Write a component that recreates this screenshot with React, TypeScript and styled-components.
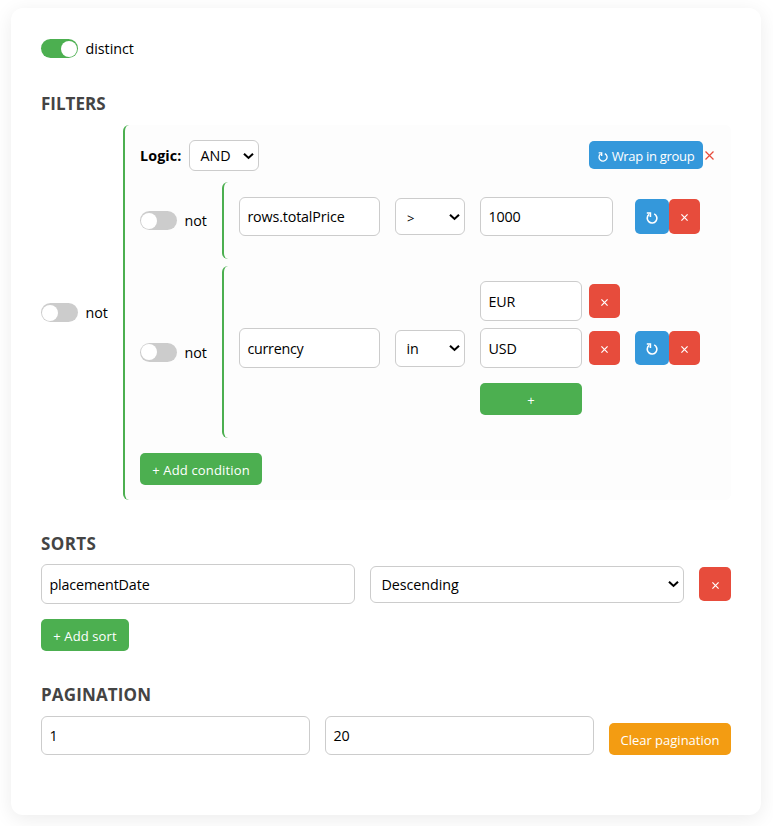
import React from 'react';
import styled, { createGlobalStyle, css } from 'styled-components';

const GlobalStyle = createGlobalStyle`
  *, *::before, *::after { box-sizing: border-box; }
  body {
    margin: 0;
    min-height: 826px;
    background: #fff;
    color: #000;
    font-family: "Segoe UI", "Open Sans", "Noto Sans", sans-serif;
    font-size: 14.3px;
    overflow: hidden;
  }
  #root { display: flow-root; }
  input, select, button { font-family: inherit; margin: 0; }
`;

const Card = styled.main`
  width: 750px;
  height: 807px;
  margin: 8px 0 0 11px;
  padding: 30px;
  background: #fff;
  border-radius: 12px;
  box-shadow: 0 4px 20px rgba(0, 0, 0, 0.08);
`;

const ToggleLabel = styled.label<{ $width?: number }>`
  display: flex;
  flex: none;
  align-items: center;
  gap: 7.6px;
  width: ${p => (p.$width ? `${p.$width}px` : 'auto')};
  height: 21px;
  line-height: 21px;
  letter-spacing: -0.05px;
`;

const Track = styled.span<{ $on?: boolean }>`
  display: flex;
  flex: none;
  justify-content: ${p => (p.$on ? 'flex-end' : 'flex-start')};
  width: 37px;
  height: 19px;
  padding: 1.5px 1.5px 1.5px 1px;
  border-radius: 10px;
  background: ${p => (p.$on ? '#4caf50' : '#ccc')};
`;

const Knob = styled.span`
  width: 16px;
  height: 16px;
  border-radius: 50%;
  background: #fff;
`;

const ToggleText = styled.span`
  padding-top: 0.5px;
`;

const Heading = styled.h3<{ $top: number; $tracking?: number }>`
  margin: ${p => p.$top}px 0 0;
  height: 24px;
  line-height: 24px;
  font-size: 17px;
  font-weight: 700;
  color: #444;
  letter-spacing: ${p => p.$tracking ?? 0}px;
`;

const FilterRoot = styled.div`
  display: flex;
  align-items: center;
  margin-top: 9px;
`;

const bracket = css`
  border-left: 2px solid #4caf50;
  border-radius: 6px;
  background: #fdfdfd;
`;

const Group = styled.section`
  ${bracket}
  flex: 1;
  height: 375px;
  padding: 15px;
`;

const GroupHeader = styled.div`
  display: flex;
  align-items: center;
  height: 31px;
`;

const LogicLabel = styled.strong`
  width: 49px;
  font-weight: 700;
  letter-spacing: 0.1px;
`;

const Spacer = styled.div`
  flex: 1;
`;

const ConditionRow = styled.div<{ $top: number }>`
  display: flex;
  align-items: center;
  margin-top: ${p => p.$top}px;
`;

const Condition = styled.div<{ $height: number }>`
  ${bracket}
  display: flex;
  flex: 1;
  align-items: flex-start;
  height: ${p => p.$height}px;
  padding: 15px 0 0 15px;
`;

const CenteredCondition = styled(Condition)`
  align-items: center;
  padding-top: 0;
  padding-bottom: 8px;
`;

const Input = styled.input<{ $width: number; $height?: number; $tracking?: number }>`
  flex: none;
  width: ${p => p.$width}px;
  height: ${p => p.$height ?? 39}px;
  padding: 0 7.4px;
  border: 1px solid #ccc;
  border-radius: 6px;
  background: #fff;
  color: #000;
  font-size: 14.3px;
  letter-spacing: ${p => p.$tracking ?? -0.12}px;
  outline: none;
`;

const SelectBox = styled.div<{ $width: number; $height: number }>`
  position: relative;
  flex: none;
  width: ${p => p.$width}px;
  height: ${p => p.$height}px;
`;

const NativeSelect = styled.select<{ $small?: boolean }>`
  appearance: none;
  display: block;
  width: 100%;
  height: 100%;
  padding: ${p => (p.$small ? '2px 20px 0 11px' : '0 20px 0 10.4px')};
  border: 1px solid #ccc;
  border-radius: 6px;
  background: #fff;
  color: #000;
  font-size: ${p => (p.$small ? 13 : 14.3)}px;
  letter-spacing: -0.03px;
  outline: none;
`;

const Chevron = styled.svg`
  position: absolute;
  top: calc(50% - 4px);
  right: 5px;
  width: 11px;
  height: 8px;
  pointer-events: none;
`;

const tones = { green: '#4caf50', blue: '#3498db', red: '#e74c3c', orange: '#f39c12' };

const Button = styled.button<{ $tone: keyof typeof tones; $width: number; $height?: number; $tracking?: number }>`
  display: flex;
  flex: none;
  align-items: center;
  justify-content: center;
  gap: 4px;
  width: ${p => p.$width}px;
  height: ${p => p.$height ?? 32}px;
  padding: 2px 0 0;
  border: 0;
  border-radius: 5px;
  background: ${p => tones[p.$tone]};
  color: #fff;
  font-size: 13px;
  line-height: 18px;
  letter-spacing: ${p => p.$tracking ?? 0}px;
  white-space: nowrap;
`;

const WrapButton = styled(Button)`
  margin-bottom: 2px;
  padding-top: 3px;

  svg {
    margin-top: 2px;
  }
`;

const CloseLink = styled.button`
  display: flex;
  align-items: center;
  width: 13px;
  padding: 0 0 0 2px;
  border: 0;
  background: none;
  color: #e74c3c;
`;

const Fields = styled.div<{ $top?: number; $align?: string }>`
  display: flex;
  align-items: ${p => p.$align ?? 'center'};
  gap: 15px;
  margin-top: ${p => p.$top ?? 0}px;
`;

const Actions = styled.div<{ $left: number }>`
  display: flex;
  margin-left: ${p => p.$left}px;
`;

const Values = styled.div`
  display: flex;
  flex-direction: column;
  gap: 7px;
  width: 140px;
`;

const ValueRow = styled.div`
  display: flex;
  align-items: center;
  gap: 7px;
`;

const Offset = styled.div<{ $top: number }>`
  padding-top: ${p => p.$top}px;
`;

const Cross = ({ size = 7 }: { size?: number }) => (
  <svg width={size} height={size} viewBox="0 0 7 7" fill="none" stroke="currentColor" strokeWidth={size > 8 ? 0.95 : 1.2}>
    <path d="M.4.4l6.2 6.2M6.6.4L.4 6.6" />
  </svg>
);

const Reload = ({ size = 12 }: { size?: number }) => (
  <svg width={size} height={size} viewBox="0 0 12 12" fill="none" stroke="currentColor" strokeWidth="1.6">
    <path d="M8.2 1.9a4.8 4.8 0 1 1-5.1.5" />
    <path d="M.8 1h3.6v3.9" />
  </svg>
);

const Select = ({ width, height = 37, value, small }: { width: number; height?: number; value: string; small?: boolean }) => (
  <SelectBox $width={width} $height={height}>
    <NativeSelect $small={small}><option>{value}</option></NativeSelect>
    <Chevron viewBox="0 0 11 8" fill="none" stroke="#000" strokeWidth="2.1">
      <path d="M1 1.7l4.5 4.2L10 1.7" />
    </Chevron>
  </SelectBox>
);

const Toggle = ({ text, on, width }: { text: string; on?: boolean; width?: number }) => (
  <ToggleLabel $width={width}>
    <Track $on={on}><Knob /></Track>
    <ToggleText>{text}</ToggleText>
  </ToggleLabel>
);

const RowActions = ({ left, height }: { left: number; height: number }) => (
  <Actions $left={left}>
    <Button $tone="blue" $width={34} $height={height} aria-label="Wrap"><Reload /></Button>
    <Button $tone="red" $width={31} $height={height} aria-label="Remove"><Cross /></Button>
  </Actions>
);

export default function App() {
  return (
    <>
      <GlobalStyle />
      <Card>
        <Toggle text="distinct" on />

        <Heading $top={33}>FILTERS</Heading>
        <FilterRoot>
          <Toggle text="not" width={82} />
          <Group>
            <GroupHeader>
              <LogicLabel>Logic:</LogicLabel>
              <Select width={70} height={31} value="AND" />
              <Spacer />
              <WrapButton $tone="blue" $width={114} $height={28} $tracking={-0.3}><Reload size={10} />Wrap in group</WrapButton>
              <CloseLink aria-label="Remove group"><Cross size={9} /></CloseLink>
            </GroupHeader>

            <ConditionRow $top={11}>
              <Toggle text="not" width={82} />
              <Condition $height={77}>
                <Fields>
                  <Input $width={141} $tracking={-0.15} defaultValue="rows.totalPrice" />
                  <Select width={70} value=">" small />
                  <Input $width={133} defaultValue="1000" />
                </Fields>
                <Offset $top={2}><RowActions left={22} height={35} /></Offset>
              </Condition>
            </ConditionRow>

            <ConditionRow $top={7}>
              <Toggle text="not" width={82} />
              <CenteredCondition $height={172}>
                <Fields>
                  <Input $width={141} $height={40} $tracking={-0.25} defaultValue="currency" />
                  <Select width={70} value="in" />
                  <Values>
                    <ValueRow>
                      <Input $width={102} $height={40} defaultValue="EUR" />
                      <Button $tone="red" $width={31} $height={34} aria-label="Remove value"><Cross /></Button>
                    </ValueRow>
                    <ValueRow>
                      <Input $width={102} $height={40} defaultValue="USD" />
                      <Button $tone="red" $width={31} $height={34} aria-label="Remove value"><Cross /></Button>
                    </ValueRow>
                    <Offset $top={8}><Button $tone="green" $width={102}>+</Button></Offset>
                  </Values>
                </Fields>
                <RowActions left={15} height={34} />
              </CenteredCondition>
            </ConditionRow>

            <Offset $top={15}><Button $tone="green" $width={122} $tracking={0.15}>+ Add condition</Button></Offset>
          </Group>
        </FilterRoot>

        <Heading $top={32} $tracking={0.4}>SORTS</Heading>
        <Fields $top={8}>
          <Input $width={314} $height={40} defaultValue="placementDate" />
          <Select width={314} value="Descending" />
          <Button $tone="red" $width={32} $height={34} aria-label="Remove sort"><Cross /></Button>
        </Fields>
        <Offset $top={15}><Button $tone="green" $width={88} $tracking={0.1}>+ Add sort</Button></Offset>

        <Heading $top={32} $tracking={0.15}>PAGINATION</Heading>
        <Fields $top={9} $align="flex-end">
          <Input $width={269} defaultValue="1" />
          <Input $width={269} defaultValue="20" />
          <Button $tone="orange" $width={122}>Clear pagination</Button>
        </Fields>
      </Card>
    </>
  );
}
